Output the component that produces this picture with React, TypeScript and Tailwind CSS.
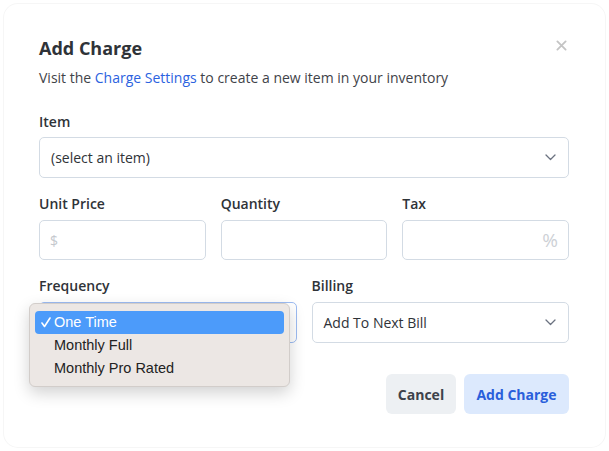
import React from "react";

const Chevron = () => (
  <svg width="11" height="7" viewBox="0 0 11 7" fill="none" stroke="#6b7280" strokeWidth="1.3" strokeLinecap="round" strokeLinejoin="round">
    <path d="M1 1l4.5 4.5L10 1" />
  </svg>
);

export default function App() {
  return (
    <div className="w-[609px] h-[451px] bg-white p-[4px]" style={{ fontFamily: '"Open Sans", "Noto Sans", sans-serif' }}>
      <div className="relative w-[601px] h-[443px] rounded-[14px] bg-white ring-1 ring-[#f6f6f6] pl-[35px] pr-[36px] pt-[30px]">
        <button className="absolute right-[38px] top-[36px] text-[#c4c4c4]">
          <svg width="11" height="11" viewBox="0 0 12 12" stroke="currentColor" strokeWidth="2" strokeLinecap="round">
            <path d="M1.5 1.5l9 9M10.5 1.5l-9 9" />
          </svg>
        </button>
        <h2 className="text-[18px] leading-[28px] font-bold text-[#2f3338]">Add Charge</h2>
        <p className="mt-[6px] text-[14px] leading-[20px] text-[#3f4349]">
          Visit the <span className="text-[#2b62e0]">Charge Settings</span> to create a new item in your inventory
        </p>

        <div className="mt-[24px]">
          <label className="block text-[14px] leading-[20px] font-semibold text-[#2f3338]">Item</label>
          <div className="mt-[5px] h-[41px] rounded-[5px] border border-[#d3dbe4] flex items-center justify-between pl-[11px] pr-[12px]">
            <span className="text-[14px] text-[#2f3338]">(select an item)</span>
            <Chevron />
          </div>
        </div>

        <div className="mt-[16px] grid grid-cols-3 gap-[15px]">
          <div>
            <label className="block text-[14px] leading-[20px] font-semibold text-[#2f3338]">Unit Price</label>
            <div className="mt-[6px] h-[40px] rounded-[5px] border border-[#d3dbe4] flex items-center pl-[10px]">
              <span className="text-[14px] text-[#c4c8cd]">$</span>
            </div>
          </div>
          <div>
            <label className="block text-[14px] leading-[20px] font-semibold text-[#2f3338]">Quantity</label>
            <div className="mt-[6px] h-[40px] rounded-[5px] border border-[#d3dbe4]"></div>
          </div>
          <div>
            <label className="block text-[14px] leading-[20px] font-semibold text-[#2f3338]">Tax</label>
            <div className="mt-[6px] h-[40px] rounded-[5px] border border-[#d3dbe4] flex items-center justify-end pr-[10px]">
              <span className="text-[19px] text-[#cdd1d6]">%</span>
            </div>
          </div>
        </div>

        <div className="relative mt-[16px] grid grid-cols-2 gap-[15px]">
          <div>
            <label className="block text-[14px] leading-[20px] font-semibold text-[#2f3338]">Frequency</label>
            <div className="mt-[6px] h-[41px] rounded-[5px] border border-[#9dbcf2]"></div>
          </div>
          <div>
            <label className="block text-[14px] leading-[20px] font-semibold text-[#2f3338]">Billing</label>
            <div className="mt-[6px] h-[41px] rounded-[5px] border border-[#d3dbe4] flex items-center justify-between pl-[11px] pr-[12px]">
              <span className="text-[14px] text-[#2f3338]">Add To Next Bill</span>
              <Chevron />
            </div>
          </div>

          <div
            className="absolute left-[-10px] top-[27px] w-[261px] rounded-[6px] bg-[#ece7e4] border border-[#d2cdca] shadow-[0_6px_16px_rgba(0,0,0,0.18)] px-[5px] pt-[7px] pb-[6px]"
            style={{ fontFamily: '"Liberation Sans", Arial, sans-serif' }}
          >
            <div className="h-[23px] rounded-[4px] bg-[#4c9bfa] text-white text-[14.5px] flex items-center pl-[6px]">
              <svg width="10" height="11" viewBox="0 0 10 11" fill="none" stroke="white" strokeWidth="1.6" strokeLinecap="round" strokeLinejoin="round" className="mr-[3px]">
                <path d="M1 6l2.5 3.5L9 1" />
              </svg>
              <span>One Time</span>
            </div>
            <div className="h-[23px] text-[14.5px] text-[#222] flex items-center pl-[19px]">Monthly Full</div>
            <div className="h-[23px] text-[14.5px] text-[#222] flex items-center pl-[19px]">Monthly Pro Rated</div>
          </div>
        </div>

        <div className="mt-[31px] flex justify-end gap-[8px]">
          <button className="h-[40px] w-[70px] rounded-[6px] bg-[#edf0f3] text-[14px] font-bold text-[#3d424a]">Cancel</button>
          <button className="h-[40px] w-[105px] rounded-[6px] bg-[#dce9fd] text-[14px] font-bold text-[#2a5fdb]">Add Charge</button>
        </div>
      </div>
    </div>
  );
}
